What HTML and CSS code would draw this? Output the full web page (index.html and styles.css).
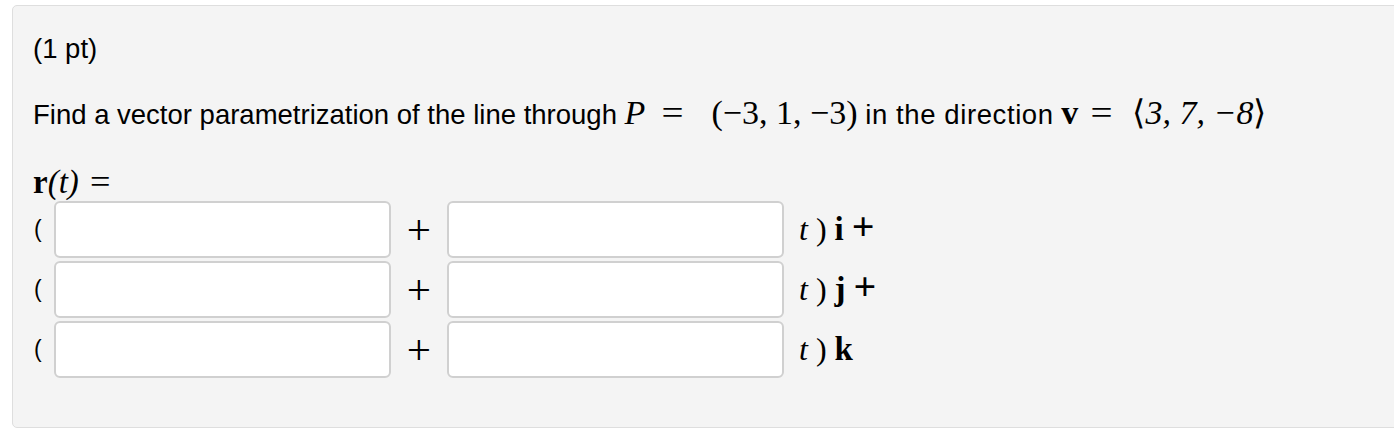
FILE: index.html
```html
<!DOCTYPE html>
<html>
<head>
<meta charset="utf-8">
<link rel="stylesheet" href="styles.css">
</head>
<body>
<div class="panel">
  <p class="pts">(1 pt)</p>
  <p class="question">Find a vector parametrization of the line through <span class="m"><i>P</i><span class="eq">=</span></span><span class="m">(−3,&nbsp;1,&nbsp;−3)</span> <span class="wide">in the direction</span> <span class="m"><b>v</b><span class="eq eq-v">=</span></span><span class="m">⟨<i>3,&nbsp;7,&nbsp;−8</i>⟩</span></p>
  <p class="rt"><b>r</b><i>(t)</i><span class="eq-r">=</span></p>
  <div class="grid">
    <span class="paren">(</span><span class="box"></span><span class="plus">+</span><span class="box"></span><span class="tail"><i>t</i>&nbsp;)&nbsp;<b>i</b>&nbsp;<span class="tplus">+</span></span>
    <span class="paren">(</span><span class="box"></span><span class="plus">+</span><span class="box"></span><span class="tail"><i>t</i>&nbsp;)&nbsp;<b>j</b>&nbsp;<span class="tplus">+</span></span>
    <span class="paren">(</span><span class="box"></span><span class="plus">+</span><span class="box"></span><span class="tail"><i>t</i>&nbsp;)&nbsp;<b>k</b></span>
  </div>
</div>
</body>
</html>
```
FILE: styles.css
```css
html, body {
  margin: 0;
  padding: 0;
  background: #ffffff;
  overflow: hidden;
}
body {
  font-family: "Liberation Sans", Arial, sans-serif;
  color: #000;
}
.panel {
  margin: 5px -20px 0 12px;
  height: 423px;
  box-sizing: border-box;
  background: #f4f4f4;
  border: 1px solid #dedede;
  border-radius: 5px;
  padding: 28px 20px 0 20px;
}
.pts {
  margin: 0;
  font-size: 27.5px;
  line-height: 30px;
}
.question {
  margin: 34px 0 0 0;
  font-size: 27.5px;
  line-height: 30px;
  white-space: nowrap;
}
.wide {
  letter-spacing: 0.6px;
}
.m {
  font-family: "Liberation Serif", "Times New Roman", serif;
  font-size: 34px;
  line-height: 30px;
}
.eq {
  display: inline-block;
  margin: 0 29px 0 18px;
  transform: scaleX(1.15);
}
.eq-v {
  margin: 0 21px 0 14px;
}
.rt {
  margin: 37px 0 0 0;
  height: 30px;
  line-height: 30px;
  font-family: "Liberation Serif", "Times New Roman", serif;
  font-size: 33px;
}
.eq-r {
  display: inline-block;
  margin-left: 12px;
  transform: scaleX(1.1);
}
.grid {
  display: grid;
  grid-template-columns: 21px 337px 56px 337px auto;
  grid-auto-rows: 57px;
  row-gap: 3px;
  margin-top: 4px;
  align-items: center;
}
.paren {
  font-size: 23px;
  padding-left: 1px;
}
.box {
  height: 57px;
  box-sizing: border-box;
  background: #fff;
  border: 2px solid #d0d0d0;
  border-radius: 6px;
}
.plus {
  text-align: center;
  font-size: 43px;
  line-height: 40px;
  font-family: "Liberation Serif", "Times New Roman", serif;
}
.tail {
  padding-left: 15px;
  font-family: "Liberation Serif", "Times New Roman", serif;
  font-size: 32px;
  white-space: nowrap;
}
.tail b {
  font-size: 33px;
}
.tplus {
  font-size: 40px;
  font-weight: bold;
  line-height: 30px;
}
```
